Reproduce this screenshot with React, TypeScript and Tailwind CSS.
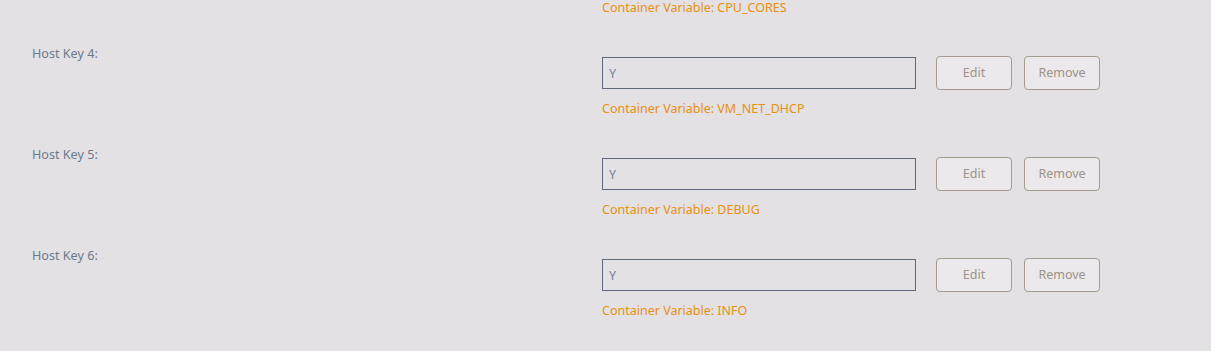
import { useState } from 'react';

type HostKey = { id: number; value: string; variable: string };

const keys: HostKey[] = [
  { id: 4, value: 'Y', variable: 'VM_NET_DHCP' },
  { id: 5, value: 'Y', variable: 'DEBUG' },
  { id: 6, value: 'Y', variable: 'INFO' },
];

const HostKeyRow = ({ hostKey }: { hostKey: HostKey }) => {
  const [value, setValue] = useState(hostKey.value);

  return (
    <div className="flex items-start pb-[28px]">
      <label className="w-[602px] shrink-0 pl-8 pt-px text-[12.6px] leading-[18px] text-[#6c7a8d]">Host Key {hostKey.id}:</label>
      <div className="flex flex-col">
        <div className="mt-3 flex h-[34px] items-center">
          <input
            value={value}
            onChange={(e) => setValue(e.target.value)}
            className="h-8 w-[314px] border border-[#5d687a] bg-transparent px-[6px] text-[12.5px] text-[#768294] outline-none"
          />
          <button className="ml-5 h-[34px] w-[76px] rounded-[4px] border border-[#a59a8d] bg-[#ebe9ec] text-[12.5px] text-[#9d9388]">
            Edit
          </button>
          <button className="ml-3 h-[34px] w-[76px] rounded-[4px] border border-[#a59a8d] bg-[#ebe9ec] text-[12.5px] text-[#9d9388]">
            Remove
          </button>
        </div>
        <p className="mt-[11px] text-[12.5px] leading-4 text-[#e8900f]">Container Variable: {hostKey.variable}</p>
      </div>
    </div>
  );
};

export default function App() {
  return (
    <div className="min-h-[351px] w-full overflow-hidden bg-[#e3e1e4] font-['Noto_Sans',sans-serif]">
      <p className="pl-[602px] text-[12.5px] leading-[16px] text-[#e8900f]">Container Variable: CPU_CORES</p>
      <div className="mt-[28px]">
        {keys.map((k) => (
          <HostKeyRow key={k.id} hostKey={k} />
        ))}
      </div>
    </div>
  );
}
